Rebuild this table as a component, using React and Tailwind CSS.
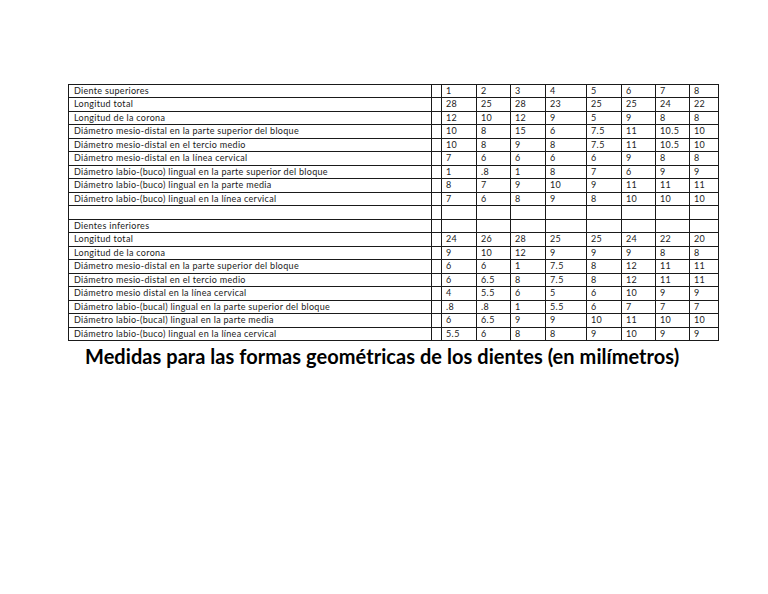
import React from "react";

const upper = [
  ["Diente superiores", ["1", "2", "3", "4", "5", "6", "7", "8"]],
  ["Longitud total", ["28", "25", "28", "23", "25", "25", "24", "22"]],
  ["Longitud de la corona", ["12", "10", "12", "9", "5", "9", "8", "8"]],
  ["Diámetro mesio-distal en la parte superior del bloque", ["10", "8", "15", "6", "7.5", "11", "10.5", "10"]],
  ["Diámetro mesio-distal en el tercio medio", ["10", "8", "9", "8", "7.5", "11", "10.5", "10"]],
  ["Diámetro mesio-distal en la línea cervical", ["7", "6", "6", "6", "6", "9", "8", "8"]],
  ["Diámetro labio-(buco) lingual en la parte superior del bloque", ["1", ".8", "1", "8", "7", "6", "9", "9"]],
  ["Diámetro labio-(buco) lingual en la parte media", ["8", "7", "9", "10", "9", "11", "11", "11"]],
  ["Diámetro labio-(buco) lingual en la línea cervical", ["7", "6", "8", "9", "8", "10", "10", "10"]],
  ["", ["", "", "", "", "", "", "", ""]],
  ["Dientes inferiores", ["", "", "", "", "", "", "", ""]],
  ["Longitud total", ["24", "26", "28", "25", "25", "24", "22", "20"]],
  ["Longitud de la corona", ["9", "10", "12", "9", "9", "9", "8", "8"]],
  ["Diámetro mesio-distal en la parte superior del bloque", ["6", "6", "1", "7.5", "8", "12", "11", "11"]],
  ["Diámetro mesio-distal en el tercio medio", ["6", "6.5", "8", "7.5", "8", "12", "11", "11"]],
  ["Diámetro mesio distal en la línea cervical", ["4", "5.5", "6", "5", "6", "10", "9", "9"]],
  ["Diámetro labio-(bucal) lingual en la parte superior del bloque", [".8", ".8", "1", "5.5", "6", "7", "7", "7"]],
  ["Diámetro labio-(bucal) lingual en la parte media", ["6", "6.5", "9", "9", "10", "11", "10", "10"]],
  ["Diámetro labio-(buco) lingual en la línea cervical", ["5.5", "6", "8", "8", "9", "10", "9", "9"]],
];

export default function App() {
  return (
    <div className="w-[768px] h-[594px] bg-white overflow-hidden" style={{ fontFamily: "Lato, 'Open Sans', sans-serif" }}>
      <div className="pt-[84px] pl-[68px]">
        <div className="grid w-[651px] gap-px bg-[#1a1a1a] p-px grid-cols-[362px_9px_34px_33px_34px_40px_34px_33px_33px_28px] grid-rows-[12px_13px_12px_13px_12px_13px_12px_13px_12px_13px_12px_13px_12px_13px_12px_13px_12px_13px_12px]">
          {upper.map(([label, vals], i) => (
            <React.Fragment key={i}>
              <div className="bg-white pl-[5px] text-[9px] leading-[12px] text-[#1a1a1a] whitespace-nowrap tracking-[0.3px]">{label}</div>
              <div className="bg-white" />
              {vals.map((v, j) => (
                <div key={j} className="bg-white pl-[4px] text-[9px] leading-[12px] text-[#222] tracking-[0.4px]">{v}</div>
              ))}
            </React.Fragment>
          ))}
        </div>
      </div>
      <div className="pl-[85px] pt-[2px] text-[20px] font-bold leading-[26px] text-black whitespace-nowrap tracking-[0.05px]">
        Medidas para las formas geométricas de los dientes (en milímetros)
      </div>
    </div>
  );
}
